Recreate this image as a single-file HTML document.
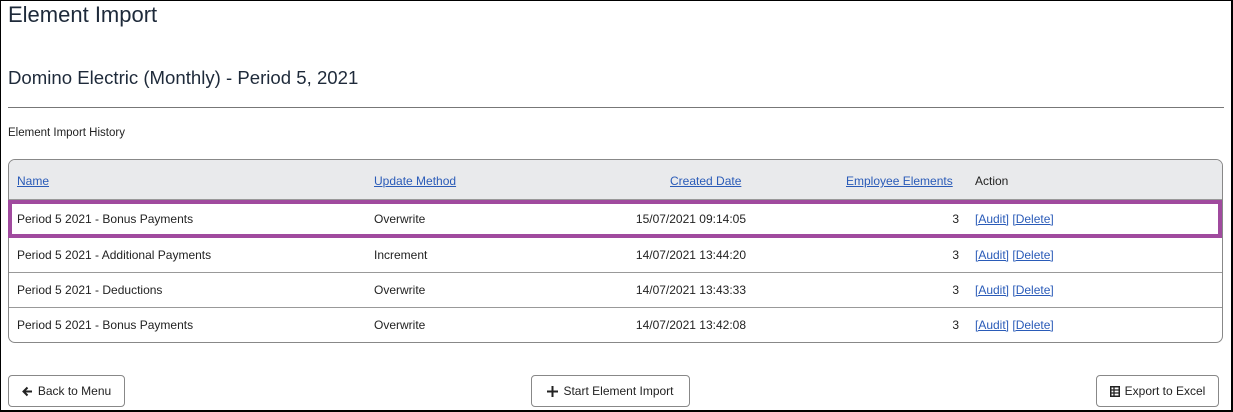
<!DOCTYPE html>
<html><head><style>
*{margin:0;padding:0;box-sizing:border-box}
body{width:1233px;height:412px;position:relative;background:#fff;font-family:"Liberation Sans",sans-serif;color:#222;overflow:hidden}
.frame{position:absolute;left:0;top:0;width:1233px;height:412px;border:1px solid #000;border-right-width:2px;border-bottom-width:2px}
.a{position:absolute;white-space:nowrap}
h1{position:absolute;left:8px;top:2px;font-size:22px;font-weight:normal;color:#1e2a3a}
.tbl{position:absolute;left:8px;top:159px;width:1215px;height:184px;border:1px solid #888;border-radius:7px;overflow:hidden}
.hd{position:absolute;left:0;top:0;width:100%;height:40px;background:#e9eaec;border-bottom:1px solid #999}
.row{position:absolute;left:0;width:100%;border-bottom:1px solid #999}
.t{font-size:12px}
.l{color:#2a5bb8;text-decoration:underline}
.btn{position:absolute;top:375px;height:32px;border:1px solid #888;border-radius:4px;font-size:12px;display:flex;align-items:center;justify-content:center;gap:5px;background:#fff}
</style></head><body>
<div class="frame"></div>
<h1>Element Import</h1>
<div class="a" style="left:8px;top:67px;font-size:18.6px;color:#1e2a3a">Domino Electric (Monthly) - Period 5, 2021</div>
<div class="a" style="left:8px;top:107px;width:1216px;height:1px;background:#777"></div>
<div class="a" style="left:8px;top:127px;font-size:11.5px">Element Import History</div>
<div class="tbl">
<div class="hd"></div>
<div class="row" style="top:40px;height:38px"></div>
<div class="row" style="top:78px;height:35px"></div>
<div class="row" style="top:113px;height:35px"></div>
</div>
<div class="a t l" style="left:17px;top:174px">Name</div>
<div class="a t l" style="left:374px;top:174px">Update Method</div>
<div class="a t l" style="left:670px;top:174px">Created Date</div>
<div class="a t l" style="left:846px;top:174px">Employee Elements</div>
<div class="a t" style="left:975px;top:174px">Action</div>

<div class="a t" style="left:17px;top:212px">Period 5 2021 - Bonus Payments</div>
<div class="a t" style="left:374px;top:212px">Overwrite</div>
<div class="a t" style="right:487px;top:212px">15/07/2021 09:14:05</div>
<div class="a t" style="right:274px;top:212px">3</div>
<div class="a t" style="left:975px;top:212px"><span class="l">[Audit]</span> <span class="l">[Delete]</span></div>

<div class="a t" style="left:17px;top:248px">Period 5 2021 - Additional Payments</div>
<div class="a t" style="left:374px;top:248px">Increment</div>
<div class="a t" style="right:487px;top:248px">14/07/2021 13:44:20</div>
<div class="a t" style="right:274px;top:248px">3</div>
<div class="a t" style="left:975px;top:248px"><span class="l">[Audit]</span> <span class="l">[Delete]</span></div>

<div class="a t" style="left:17px;top:283px">Period 5 2021 - Deductions</div>
<div class="a t" style="left:374px;top:283px">Overwrite</div>
<div class="a t" style="right:487px;top:283px">14/07/2021 13:43:33</div>
<div class="a t" style="right:274px;top:283px">3</div>
<div class="a t" style="left:975px;top:283px"><span class="l">[Audit]</span> <span class="l">[Delete]</span></div>

<div class="a t" style="left:17px;top:318px">Period 5 2021 - Bonus Payments</div>
<div class="a t" style="left:374px;top:318px">Overwrite</div>
<div class="a t" style="right:487px;top:318px">14/07/2021 13:42:08</div>
<div class="a t" style="right:274px;top:318px">3</div>
<div class="a t" style="left:975px;top:318px"><span class="l">[Audit]</span> <span class="l">[Delete]</span></div>

<div class="a" style="left:8px;top:200px;width:1214px;height:38px;border:4px solid #a04a9e"></div>

<div class="btn" style="left:8px;width:117px"><svg width="11" height="11" viewBox="0 0 11 11"><path d="M10 5.5H2M5.5 1.5L1.5 5.5L5.5 9.5" stroke="#222" stroke-width="2" fill="none"/></svg>Back to Menu</div>
<div class="btn" style="left:531px;width:159px"><svg width="11" height="11" viewBox="0 0 11 11"><path d="M5.5 0V11M0 5.5H11" stroke="#222" stroke-width="2"/></svg>Start Element Import</div>
<div class="btn" style="left:1096px;width:123px"><svg width="10" height="11" viewBox="0 0 10 11"><rect x="0.75" y="0.75" width="8.5" height="9.5" fill="none" stroke="#222" stroke-width="1.5"/><path d="M1 4H9M1 7H9M4 1V10" stroke="#222" stroke-width="1.3"/></svg>Export to Excel</div>
</body></html>
